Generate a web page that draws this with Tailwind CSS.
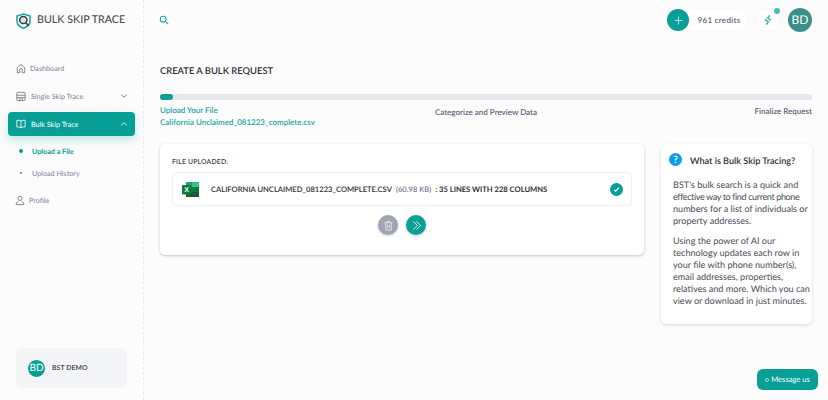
<!DOCTYPE html>
<html><head><meta charset="utf-8"><script src="https://cdn.jsdelivr.net/npm/@tailwindcss/browser@4"></script></head>
<body class="m-0">
<div class="relative flex h-[400px] w-[828px] overflow-hidden bg-[#fcfcfc] font-['Lato','Noto_Sans',sans-serif] text-[#3f4254] [text-rendering:geometricPrecision]">
<aside class="flex h-full w-[144px] shrink-0 flex-col border-r border-dashed border-[#e9e9ee]">
  <div class="flex h-[40px] items-center gap-[6px] pl-[16px] pt-[1px]">
    <svg width="15" height="16" viewBox="0 0 15 16" fill="none"><path d="M7.5 1 L14 3 V8 C14 11.5 11 14 7.5 15.3 C4 14 1 11.5 1 8 V3 Z" stroke="#1aa6a0" stroke-width="1.6"/><circle cx="7.3" cy="7" r="3.6" fill="#d9e4e6" stroke="#33373f" stroke-width="1.5"/><path d="M10 10 L12.6 12.8" stroke="#33373f" stroke-width="1.6"/></svg>
    <span class="text-[10.7px] font-medium whitespace-nowrap text-[#4a4d57]">BULK SKIP TRACE</span>
  </div>
  <nav class="mt-[16px] flex flex-col text-[#7e8299]">
    <div class="flex h-[24px] items-center gap-[4px] pl-[16px]">
      <svg width="10" height="11" viewBox="0 0 24 24" fill="none" stroke="#6f7280" stroke-width="2"><path d="M3 10 12 2l9 8v12h-6v-7a3 3 0 0 0-6 0v7H3z"/></svg>
      <span class="pt-[2px] text-[7.2px]">Dashboard</span>
    </div>
    <div class="mt-[4px] flex h-[24px] items-center gap-[5px] pl-[16px] pr-[15px]">
      <svg width="10" height="11" viewBox="0 0 24 24" fill="none" stroke="#6f7280" stroke-width="2"><rect x="2" y="2" width="20" height="20" rx="3"/><path d="M2 9h20M2 15h20M9 15v7M15 15v7" /></svg>
      <span class="flex-1 pt-[2px] text-[7.2px]">Single Skip Trace</span>
      <svg width="8" height="8" viewBox="0 0 24 24" fill="none" stroke="#55586a" stroke-width="2.5"><path d="m4 8 8 8 8-8"/></svg>
    </div>
    <div class="mx-[8px] mt-[4px] flex h-[24px] items-center gap-[5px] rounded-[4px] bg-[#089f97] pl-[8px] pr-[7px] text-white shadow-[0_4px_10px_rgba(8,159,151,0.25)]">
      <svg width="10" height="10" viewBox="0 0 24 24" fill="none" stroke="#fff" stroke-width="2"><path d="M12 5C9 3 6 3 2 3v16c4 0 7 0 10 2 3-2 6-2 10-2V3c-4 0-7 0-10 2zM12 5v16"/></svg>
      <span class="flex-1 pt-[2px] text-[7.2px]">Bulk Skip Trace</span>
      <svg width="8" height="8" viewBox="0 0 24 24" fill="none" stroke="#fff" stroke-width="2.5"><path d="m4 16 8-8 8 8"/></svg>
    </div>
    <div class="mt-[4px] flex h-[22px] items-center pl-[19px]">
      <span class="h-[4px] w-[4px] rounded-full bg-[#089f97]"></span>
      <span class="ml-[9px] pt-[2px] text-[7.2px] font-bold text-[#089f97]">Upload a File</span>
    </div>
    <div class="flex h-[22px] items-center pl-[20px]">
      <span class="h-[2px] w-[2px] rounded-full bg-[#6f7280]"></span>
      <span class="ml-[10px] pt-[2px] text-[7.2px]">Upload History</span>
    </div>
    <div class="mt-[4px] flex h-[24px] items-center gap-[4px] pl-[15px]">
      <svg width="10" height="11" viewBox="0 0 24 24" fill="none" stroke="#6f7280" stroke-width="2"><circle cx="12" cy="7" r="5"/><path d="M9 12c-1 3-5 3-6 6v4h18v-4c-1-3-5-3-6-6"/></svg>
      <span class="pt-[2px] text-[7.2px]">Profile</span>
    </div>
  </nav>
  <div class="mx-[16px] mb-[12px] mt-auto flex h-[40px] items-center rounded-[5px] bg-[#f3f4f6] pl-[11px]">
    <span class="flex h-[19px] w-[19px] items-center justify-center rounded-full border border-white bg-[#089f97] text-[10px] text-white">BD</span>
    <span class="ml-[6px] text-[6.8px] font-bold tracking-[0.1px] text-[#4a4d57]">BST DEMO</span>
  </div>
</aside>
<main class="flex min-w-0 flex-1 flex-col">
  <header class="flex h-[40px] items-center pl-[15px] pr-[16px]">
    <svg width="10" height="10" viewBox="0 0 24 24" fill="none" stroke="#1aa6a0" stroke-width="2.5"><circle cx="10" cy="10" r="7"/><path d="m15 15 7 7"/></svg>
    <div class="ml-auto flex h-[22px] w-[80px] items-center rounded-full bg-white shadow-[0_0_3px_rgba(0,0,0,0.03)]">
      <span class="flex h-[22px] w-[22px] shrink-0 items-center justify-center rounded-full bg-[#089f97]">
        <svg width="9" height="9" viewBox="0 0 24 24" stroke="#d5f0ee" stroke-width="2.2"><path d="M12 2v20M2 12h20"/></svg>
      </span>
      <span class="ml-[8.5px] whitespace-nowrap text-[8px] font-semibold tracking-[0.3px] text-[#5e6278]">961 credits</span>
    </div>
    <div class="relative ml-[10px] flex h-[22px] w-[22px] items-center justify-center rounded-full bg-white shadow-[0_0_4px_rgba(0,0,0,0.06)]">
      <svg width="10" height="12" viewBox="0 0 24 24" fill="none" stroke="#1aa6a0" stroke-width="2.2"><path d="M15 1 5 13h6l-2 10 10-13h-6z"/></svg>
      <span class="absolute right-[-1px] top-[-1px] h-[6px] w-[6px] rounded-full bg-[#45bdb7]"></span>
    </div>
    <span class="ml-[9px] flex h-[24px] w-[24px] items-center justify-center rounded-full bg-[#38908a] text-[12px] text-white">BD</span>
  </header>
  <div class="flex flex-1 flex-col pl-[16px] pr-[16px]">
    <h1 class="mt-[25px] text-[9.4px] leading-[13px] font-semibold text-[#2b2d36]">CREATE A BULK REQUEST</h1>
    <div class="mt-[16px] h-[6px] rounded-full bg-[#e7e8ec]"><div class="h-[6px] w-[13px] rounded-full bg-[#089f97]"></div></div>
    <div class="mt-[4px] grid grid-cols-3 text-[8px] leading-[12px] font-semibold text-[#5e6278]">
      <div class="whitespace-nowrap text-[#1aa6a0]"><div>Upload Your File</div><div>California Unclaimed_081223_complete.csv</div></div>
      <div class="mt-[2px] text-center">Categorize and Preview Data</div>
      <div class="mt-[1px] text-right">Finalize Request</div>
    </div>
    <div class="mt-[16px] flex items-start gap-[17px]">
      <section class="h-[111px] w-[484px] rounded-[5px] bg-white px-[12px] pt-[13px] shadow-[0_1px_3px_rgba(0,0,0,0.22)]">
        <div class="text-[6.8px] leading-[10px] font-semibold tracking-[0.2px] text-[#3f4254]">FILE UPLOADED:</div>
        <div class="mt-[5px] flex h-[34px] items-center rounded-[4px] border border-[#eff0f3] pl-[9px] pr-[8px] text-[7.6px] font-semibold text-[#2b2d36]">
          <svg width="17" height="15" viewBox="0 0 17 15"><rect x="4" y="0" width="13" height="15" rx="1" fill="#21a366"/><rect x="10" y="0" width="7" height="5" fill="#33c481"/><rect x="4" y="5" width="6" height="5" fill="#107c41"/><rect x="10" y="5" width="7" height="5" fill="#107c41"/><rect x="4" y="10" width="13" height="5" fill="#185c37"/><rect x="0" y="3" width="9.5" height="9.5" rx="1" fill="#0e7a41"/><text x="2.3" y="10.4" font-size="7" fill="#fff" font-family="Liberation Sans">X</text></svg>
          <span class="ml-[12px] whitespace-nowrap pt-[2px]">CALIFORNIA UNCLAIMED_081223_COMPLETE.CSV</span>
          <span class="ml-[4px] whitespace-nowrap pt-[2px] font-normal text-[#5e6278]">(60.98 KB)</span>
          <span class="ml-[4px] whitespace-nowrap pt-[2px] font-bold">: 35 LINES WITH 228 COLUMNS</span>
          <span class="ml-auto flex h-[13px] w-[13px] items-center justify-center rounded-full bg-[#089f97]">
            <svg width="7" height="7" viewBox="0 0 24 24" fill="none" stroke="#fff" stroke-width="4"><path d="m4 13 5 5L20 6"/></svg>
          </span>
        </div>
        <div class="mt-[9px] flex justify-center gap-[8px]">
          <span class="flex h-[20px] w-[20px] items-center justify-center rounded-full bg-[#a1a5b1] shadow-[0_1px_3px_rgba(0,0,0,0.2)]">
            <svg width="11" height="11" viewBox="0 0 24 24" fill="none" stroke="#e8e9ed" stroke-width="2"><path d="M3 6h18M9 6V3h6v3M6 6v16h12V6M10 10v8M14 10v8"/></svg>
          </span>
          <span class="flex h-[20px] w-[20px] items-center justify-center rounded-full bg-[#089f97] shadow-[0_1px_3px_rgba(0,0,0,0.2)]">
            <svg width="11" height="11" viewBox="0 0 24 24" fill="none" stroke="#e6f7f6" stroke-width="2"><path d="m5 3 9 9-9 9M12 3l9 9-9 9"/></svg>
          </span>
        </div>
      </section>
      <section class="h-[180px] w-[151px] rounded-[5px] bg-white pl-[12px] pt-[8px] shadow-[0_1px_3px_rgba(0,0,0,0.14)]">
        <div class="flex items-center">
          <span class="ml-[-4px] flex h-[13px] w-[13px] items-center justify-center rounded-full bg-[#0b9cf0] text-[10px] leading-none font-bold text-white">?</span>
          <span class="ml-[8px] whitespace-nowrap pt-[2px] text-[9.1px] font-semibold text-[#2b2d36]">What is Bulk Skip Tracing?</span>
        </div>
        <p class="mt-[11px] whitespace-nowrap text-[9.1px] leading-[12px] text-[#4a4d57]">BST's bulk search is a quick and<br><span class="tracking-[-0.4px]">effective way to find current phone</span><br>numbers for a list of individuals or<br>property addresses.</p>
        <p class="mt-[8px] whitespace-nowrap text-[9.1px] leading-[12px] text-[#4a4d57]">Using the power of AI our<br>technology updates each row in<br>your file with phone number(s),<br>email addresses, properties,<br>relatives and more. Which you can<br>view or download in just minutes.</p>
      </section>
    </div>
  </div>
</main>
<div class="absolute bottom-[10px] right-[10px] flex h-[21px] w-[61px] items-center justify-center gap-[2px] rounded-[6px] bg-[#089f97] text-[7.6px] text-white">
  <span class="h-[4px] w-[4px] rounded-full border border-[#b5e3df] bg-[#0d7f64]"></span>Message us
</div>
</div>
</body></html>
